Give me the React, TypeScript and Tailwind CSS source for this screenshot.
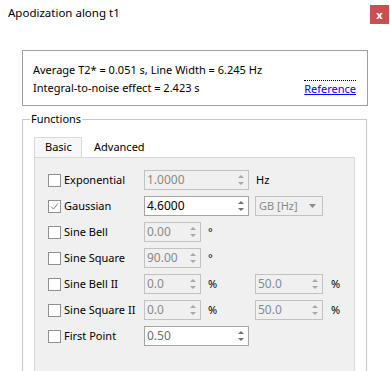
import React from "react";

const font = { fontFamily: '"Noto Sans", "Open Sans", sans-serif' };

const Arrows: React.FC<{ dim?: boolean }> = ({ dim }) => (
  <div className="flex flex-col items-center justify-center gap-[4px] w-[14px] shrink-0">
    <svg width="6" height="3" viewBox="0 0 6 3">
      <path d="M0 3 L3 0 L6 3 Z" fill={dim ? "#a8a8a8" : "#707070"} />
    </svg>
    <svg width="6" height="3" viewBox="0 0 6 3">
      <path d="M0 0 L6 0 L3 3 Z" fill={dim ? "#a8a8a8" : "#707070"} />
    </svg>
  </div>
);

const SpinBox: React.FC<{
  value: string;
  width: string;
  enabled?: boolean;
  grayText?: boolean;
}> = ({ value, width, enabled, grayText }) => (
  <div
    className={`${width} h-[20px] flex items-center border shrink-0 ${
      enabled ? "bg-white border-[#a5a5a5]" : "bg-[#f0f0f0] border-[#c2c2c2]"
    }`}
  >
    <span
      className={`flex-1 pl-[2px] text-[12px] leading-none ${
        enabled && !grayText ? "text-black" : grayText ? "text-[#6d6d6d]" : "text-[#8a8a8a]"
      }`}
    >
      {value}
    </span>
    <Arrows dim={!enabled} />
  </div>
);

const CheckBox: React.FC<{ checked?: boolean }> = ({ checked }) => (
  <div className="w-[13px] h-[13px] border border-[#8f8f8f] bg-white flex items-center justify-center shrink-0">
    {checked && (
      <svg width="9" height="9" viewBox="0 0 9 9">
        <path d="M1 4.5 L3.5 7 L8 1.5" stroke="#808080" strokeWidth="1" fill="none" />
      </svg>
    )}
  </div>
);

const Row: React.FC<{ label: string; checked?: boolean; children: React.ReactNode }> = ({
  label,
  checked,
  children,
}) => (
  <div className="flex items-center h-[20px]">
    <CheckBox checked={checked} />
    <span className="ml-[3px] w-[80px] text-[11px] text-black whitespace-nowrap">{label}</span>
    {children}
  </div>
);

const Unit: React.FC<{ text: string; w: string }> = ({ text, w }) => (
  <span className={`${w} pl-[7px] text-[11px] text-black shrink-0`}>{text}</span>
);

export default function App() {
  return (
    <div className="w-[390px] h-[371px] bg-white overflow-hidden" style={font}>
      {/* title bar */}
      <header className="flex items-start justify-between h-[50px]">
        <span className="ml-[8px] mt-[4px] text-[11.5px] leading-[18px] text-black">
          Apodization along t1
        </span>
        <button className="mt-[5px] mr-[1px] w-[19px] h-[19px] bg-[#c75050] text-white text-[11px] font-bold leading-none flex items-center justify-center">
          x
        </button>
      </header>

      {/* info box */}
      <div className="mx-[22px] w-[346px] h-[56px] border border-[#a0a0a0] pt-[10px] pl-[10px] pr-[10px] text-[11px] text-black">
        <div className="leading-[18px]">Average T2* = 0.051 s, Line Width = 6.245 Hz</div>
        <div className="leading-[18px] flex justify-between items-end">
          <span>Integral-to-noise effect = 2.423 s</span>
          <a className="border-t border-dotted border-black text-[#0000ff] underline leading-[15px] mb-[1px] mr-[1px]">
            Reference
          </a>
        </div>
      </div>

      {/* functions group */}
      <fieldset className="mt-[5px] mx-[22px] w-[345px] h-[300px] border border-[#c8c8c8] px-[11px]">
        <legend className="-ml-[4px] px-[1px] text-[11px] leading-[16px] text-black">Functions</legend>

        <div className="mt-[10px] flex items-end h-[20px] text-[11px]">
          <div className="w-[48px] h-[20px] border border-b-0 border-[#d9d9d9] bg-[#f7f7f7] flex items-center pl-[10px]">
            Basic
          </div>
          <div className="ml-[12px] h-[20px] flex items-center">Advanced</div>
        </div>

        <div className="border border-[#d9d9d9] bg-[#f0f0f0] h-[260px] pt-[12px] pl-[13px] flex flex-col gap-[6px]">
          <Row label="Exponential">
            <SpinBox value="1.0000" width="w-[105px]" />
            <Unit text="Hz" w="w-[30px]" />
          </Row>
          <Row label="Gaussian" checked>
            <SpinBox value="4.6000" width="w-[105px]" enabled />
            <div className="ml-[6px] w-[68px] h-[20px] border border-[#c2c2c2] bg-[#f0f0f0] flex items-center">
              <span className="flex-1 pl-[3px] text-[11px] text-[#8a8a8a]">GB [Hz]</span>
              <svg width="7" height="4" viewBox="0 0 7 4" className="mr-[6px]">
                <path d="M0 0 L7 0 L3.5 4 Z" fill="#8a8a8a" />
              </svg>
            </div>
          </Row>
          <Row label="Sine Bell">
            <SpinBox value="0.00" width="w-[57px]" />
            <Unit text="°" w="w-[54px]" />
          </Row>
          <Row label="Sine Square">
            <SpinBox value="90.00" width="w-[57px]" />
            <Unit text="°" w="w-[54px]" />
          </Row>
          <Row label="Sine Bell II">
            <SpinBox value="0.0" width="w-[57px]" />
            <Unit text="%" w="w-[54px]" />
            <SpinBox value="50.0" width="w-[68px]" />
            <span className="pl-[8px] text-[11px] text-black">%</span>
          </Row>
          <Row label="Sine Square II">
            <SpinBox value="0.0" width="w-[57px]" />
            <Unit text="%" w="w-[54px]" />
            <SpinBox value="50.0" width="w-[68px]" />
            <span className="pl-[8px] text-[11px] text-black">%</span>
          </Row>
          <Row label="First Point">
            <SpinBox value="0.50" width="w-[105px]" enabled grayText />
          </Row>
        </div>
      </fieldset>
    </div>
  );
}
